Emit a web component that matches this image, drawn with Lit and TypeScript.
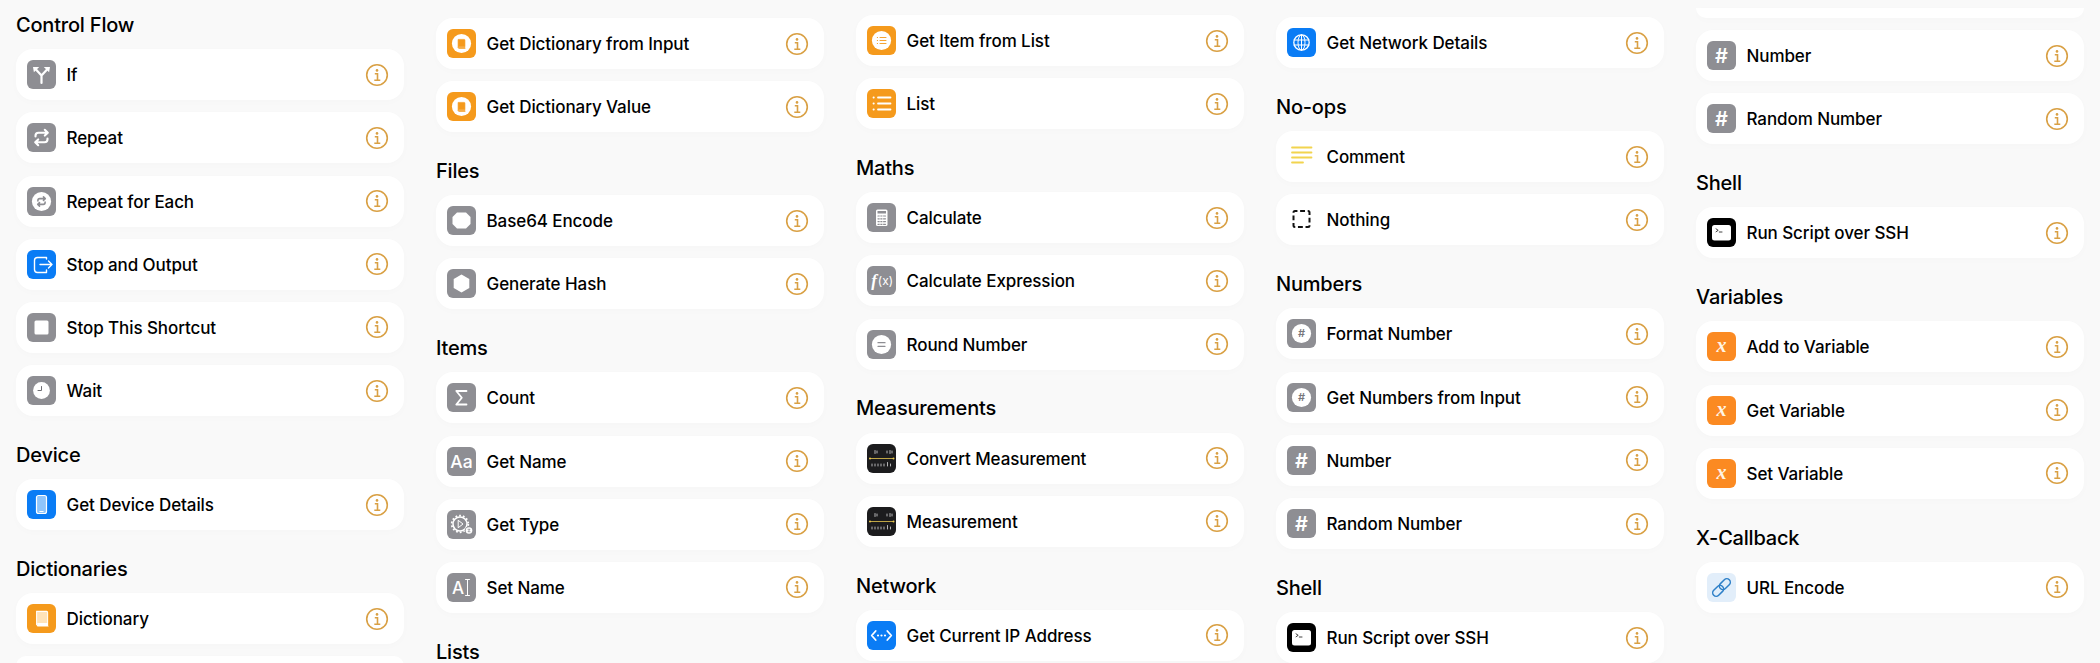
import { LitElement, html, svg, css, nothing } from "lit";
import { customElement } from "lit/decorators.js";

type Tile = "gray" | "blue" | "orange" | "amber" | "dark" | "black" | "pale" | "bare";

const W = "#fff";
const G = "#8e8e93";

const stroke = (d: string, color = W, width = 1.8) =>
  svg`<path d=${d} fill="none" stroke=${color} stroke-width=${width} stroke-linecap="round" stroke-linejoin="round"></path>`;

const disc = (r = 9.6) => svg`<circle cx="14.5" cy="14.5" r=${r} fill=${W}></circle>`;

const glyph = (
  t: string,
  size: number,
  opts: { family?: string; color?: string; y?: number; x?: number; style?: string; weight?: number } = {}
) =>
  svg`<text x=${opts.x ?? 14.5} y=${opts.y ?? 14.5 + size * 0.36} text-anchor="middle" font-size=${size}
    font-family=${opts.family ?? "Inter, sans-serif"} font-style=${opts.style ?? "normal"} font-weight=${opts.weight ?? 500} fill=${opts.color ?? W}>${t}</text>`;

const repeatArrows = (color: string, w: number) => svg`
  ${stroke("M8.5 13.5v-.8a3 3 0 0 1 3-3h9M17.8 6.8l3 2.9-3 2.9", color, w)}
  ${stroke("M20.5 15.5v.8a3 3 0 0 1-3 3h-9M11.2 22.2l-3-2.9 3-2.9", color, w)}`;

const book = (x: number, y: number, s: number, page: string, spine: string) => svg`
  <g transform="translate(${x} ${y}) scale(${s})">
    <path d="M2 1.5h9.500a1 1 0 0 1 1 1V13H3.500A1.500 1.500 0 0 0 2 14.500z" fill=${page} stroke=${spine} stroke-width="1"></path>
    <path d="M2 14.500A1.500 1.500 0 0 1 3.500 13.600h9.500v1.600l.6.8H3.500A1.500 1.500 0 0 1 2 14.500z" fill=${spine}></path>
  </g>`;

const ICONS: Record<string, { tile: Tile; art: unknown }> = {
  branch: {
    tile: "gray",
    art: svg`${stroke("M14.500 23v-7.500L8.500 9M14.500 15.500L20.500 9", W, 2.200)}
      <path d="M6 7h6.200L6.900 12.300zM23 7h-6.200l5.300 5.300z" fill=${W}></path>`,
  },
  repeat: { tile: "gray", art: repeatArrows(W, 2.100) },
  repeatEach: {
    tile: "gray",
    art: svg`${disc()}<g transform="translate(5.800 5.800) scale(.6)">${repeatArrows(G, 2.600)}</g>`,
  },
  output: {
    tile: "blue",
    art: svg`${stroke("M19.500 9V7.500h-9a3 3 0 0 0-3 3v9a3 3 0 0 0 3 3h9V20", W, 1.400)}
      ${stroke("M13 14.500h12M21.500 11l3.500 3.500-3.500 3.500", W, 1.400)}`,
  },
  stop: { tile: "gray", art: svg`<rect x="7.500" y="7.500" width="14" height="14" rx="1.500" fill=${W}></rect>` },
  wait: {
    tile: "gray",
    art: svg`${disc(8.400)}${stroke("M14.500 10.500v4h-3.500", "#6d6d72", 1)}`,
  },
  phone: {
    tile: "blue",
    art: svg`<rect x="9.500" y="5.500" width="10" height="18" rx="2" fill="#8fc5fb" stroke=${W} stroke-width="1.200"></rect>
      ${stroke("M12.800 21.500h3.400", W, 1)}`,
  },
  book: { tile: "amber", art: book(7.500, 5.800, 1.050, "#ffe3b8", W) },
  bookCircle: { tile: "amber", art: svg`${disc()}${book(9.800, 9.400, 0.650, "#f59a1c", "#f59a1c")}` },
  octagon: { tile: "gray", art: svg`<path d="M10 6.500h9l4.500 4.500v7l-4.500 4.500h-9L5.500 18v-7z" fill=${W}></path>` },
  hexagon: { tile: "gray", art: svg`<path d="M14.500 5.500l7.800 4.500v9l-7.800 4.500L6.700 19v-9z" fill=${W}></path>` },
  sum: { tile: "gray", art: stroke("M19.500 8h-10.200l5.500 6.700-5.500 6.800h10.200", W, 1.800) },
  name: { tile: "gray", art: glyph("Aa", 17.500, { y: 20.500 }) },
  type: {
    tile: "gray",
    art: svg`<circle cx="13" cy="14" r="7" fill="none" stroke=${W} stroke-width="1.500"></circle>
      <circle cx="13" cy="14" r="8.300" fill="none" stroke=${W} stroke-width="1.800" stroke-dasharray="1.800 2"></circle>
      ${stroke("M11.500 10.500l4.500 3.500-4.500 3.500z", W, 1)}
      <circle cx="22" cy="20.500" r="4.300" fill=${G}></circle>
      <circle cx="22" cy="20.500" r="3.300" fill=${W}></circle>
      ${stroke("M21 19.300h2l-2 2.400h2", G, 0.800)}`,
  },
  setName: {
    tile: "gray",
    art: svg`${glyph("A", 17, { x: 11, y: 20.500 })}${stroke("M20.500 6.500v16M18.500 6.500h4M18.500 22.500h4", W, 1)}`,
  },
  listCircle: {
    tile: "amber",
    art: svg`${disc()}${stroke("M13 11.500h6M13 14.500h6M13 17.500h6", "#f59a1c", 0.900)}
      ${stroke("M10.300 11.500h.2M10.300 14.500h.2M10.300 17.500h.2", "#f59a1c", 1)}`,
  },
  list: {
    tile: "amber",
    art: svg`${stroke("M11 8.500h12.500M11 14.500h12.500M11 20.500h12.500", W, 1.800)}
      ${stroke("M6.500 8.500h.3M6.500 14.500h.3M6.500 20.500h.3", W, 1.800)}`,
  },
  calc: {
    tile: "gray",
    art: svg`<rect x="9" y="6.500" width="11.500" height="16.500" rx="1.500" fill=${W}></rect>
      <rect x="10.500" y="8" width="8.500" height="2.500" fill=${G}></rect>
      ${stroke("M11 13h7.500M11 15.800h7.500M11 18.600h7.500M11 21.300h7.500", G, 1.200)}
      ${stroke("M13 12.500v9.300M15.700 12.500v9.300", W, 0.700)}`,
  },
  fx: {
    tile: "gray",
    art: svg`${glyph("f", 17, { x: 7, y: 19.500, family: "'Liberation Serif', serif", style: "italic", weight: 700 })}
      ${glyph("(x)", 12, { x: 18.500, y: 18.800, weight: 400 })}`,
  },
  round: {
    tile: "gray",
    art: svg`${disc()}${stroke("M11 12.700h7M11 16.300h7", G, 1.300)}`,
  },
  measure: {
    tile: "dark",
    art: svg`${stroke("M3 14.500h23", "#e9c94f", 0.800)}
      ${stroke("M8 6.500v3M10 7v2M20 7v2M23 6.500v3M25 7v2", "#ddd", 0.800)}
      ${stroke("M5 20v2M8 20v2M11 20v2M14 20v2M17 20v2M20.500 18.500v3.500M23.500 20v2", "#ddd", 0.800)}
      <circle cx="3" cy="14.500" r="1" fill="#e9c94f"></circle><circle cx="26.500" cy="14.500" r="1" fill="#e9c94f"></circle>`,
  },
  ip: {
    tile: "blue",
    art: svg`${stroke("M8.700 10l-4 4.500 4 4.500M20.300 10l4 4.500-4 4.500", W, 1.800)}
      <circle cx="11" cy="14.500" r="1.100" fill=${W}></circle><circle cx="14.500" cy="14.500" r="1.100" fill=${W}></circle><circle cx="18" cy="14.500" r="1.100" fill=${W}></circle>`,
  },
  globe: {
    tile: "blue",
    art: svg`<circle cx="14.500" cy="14.500" r="7.700" fill="none" stroke=${W} stroke-width="1.300"></circle>
      <ellipse cx="14.500" cy="14.500" rx="3.500" ry="7.700" fill="none" stroke=${W} stroke-width="1"></ellipse>
      ${stroke("M14.500 6.800v15.400M7 12h15M7 17h15", W, 1)}`,
  },
  comment: {
    tile: "bare",
    art: svg`${stroke("M5 5.500h19.500M5 10.500h19.500M5 15.500h19.500", "#f2d44e", 1.800)}${stroke("M5 20.500h11", "#f2d44e", 1.800)}`,
  },
  nothing: {
    tile: "bare",
    art: svg`<rect x="6.500" y="6" width="16" height="16" rx="1.500" fill="none" stroke="#111" stroke-width="2" stroke-dasharray="4.900 2.670" stroke-dashoffset="2.450"></rect>`,
  },
  numberCircle: { tile: "gray", art: svg`${disc()}${glyph("#", 11, { color: "#77777c", weight: 600 })}` },
  number: { tile: "gray", art: glyph("#", 20, { weight: 600 }) },
  terminal: {
    tile: "black",
    art: svg`<rect x="5" y="7" width="19" height="15.500" rx="2.500" fill=${W}></rect>
      ${stroke("M9 10.800l2.200 1.500L9 13.800M12.300 14h2.700", "#111", 0.800)}`,
  },
  variable: {
    tile: "orange",
    art: glyph("x", 20, { family: "'Liberation Serif', serif", style: "italic", weight: 700, y: 19.500, color: "#fff4e4" }),
  },
  link: {
    tile: "pale",
    art: svg`<g transform="rotate(-45 14.500 14.500)">
      <rect x="3.500" y="11" width="12.500" height="7" rx="3.500" fill="none" stroke="#2f80c8" stroke-width="1.500"></rect>
      <rect x="13" y="11" width="12.500" height="7" rx="3.500" fill="none" stroke="#2f80c8" stroke-width="1.500"></rect></g>`,
  },
};

type Row = [label: string, icon: keyof typeof ICONS];
// cut: the list runs past the screenshot edge here, so only a bare strip of card shows
type Section = { title?: string; rows: Row[]; cut?: "top" | "bottom" };
type Column = { offset: number; sections: Section[] };

const COLUMNS: Column[] = [
  {
    offset: 13,
    sections: [
      {
        title: "Control Flow",
        rows: [
          ["If", "branch"],
          ["Repeat", "repeat"],
          ["Repeat for Each", "repeatEach"],
          ["Stop and Output", "output"],
          ["Stop This Shortcut", "stop"],
          ["Wait", "wait"],
        ],
      },
      { title: "Device", rows: [["Get Device Details", "phone"]] },
      { title: "Dictionaries", rows: [["Dictionary", "book"]], cut: "bottom" },
    ],
  },
  {
    offset: 18,
    sections: [
      {
        rows: [
          ["Get Dictionary from Input", "bookCircle"],
          ["Get Dictionary Value", "bookCircle"],
        ],
      },
      {
        title: "Files",
        rows: [
          ["Base64 Encode", "octagon"],
          ["Generate Hash", "hexagon"],
        ],
      },
      {
        title: "Items",
        rows: [
          ["Count", "sum"],
          ["Get Name", "name"],
          ["Get Type", "type"],
          ["Set Name", "setName"],
        ],
      },
      { title: "Lists", rows: [] },
    ],
  },
  {
    offset: 15,
    sections: [
      {
        rows: [
          ["Get Item from List", "listCircle"],
          ["List", "list"],
        ],
      },
      {
        title: "Maths",
        rows: [
          ["Calculate", "calc"],
          ["Calculate Expression", "fx"],
          ["Round Number", "round"],
        ],
      },
      {
        title: "Measurements",
        rows: [
          ["Convert Measurement", "measure"],
          ["Measurement", "measure"],
        ],
      },
      { title: "Network", rows: [["Get Current IP Address", "ip"]] },
    ],
  },
  {
    offset: 17.3,
    sections: [
      { rows: [["Get Network Details", "globe"]] },
      {
        title: "No-ops",
        rows: [
          ["Comment", "comment"],
          ["Nothing", "nothing"],
        ],
      },
      {
        title: "Numbers",
        rows: [
          ["Format Number", "numberCircle"],
          ["Get Numbers from Input", "numberCircle"],
          ["Number", "number"],
          ["Random Number", "number"],
        ],
      },
      { title: "Shell", rows: [["Run Script over SSH", "terminal"]] },
    ],
  },
  {
    offset: 8,
    sections: [
      {
        cut: "top",
        rows: [
          ["Number", "number"],
          ["Random Number", "number"],
        ],
      },
      { title: "Shell", rows: [["Run Script over SSH", "terminal"]] },
      {
        title: "Variables",
        rows: [
          ["Add to Variable", "variable"],
          ["Get Variable", "variable"],
          ["Set Variable", "variable"],
        ],
      },
      { title: "X-Callback", rows: [["URL Encode", "link"]] },
    ],
  },
];

@customElement("app-root")
export class AppRoot extends LitElement {
  static styles = css`
    :host {
      display: grid;
      grid-template-columns: repeat(5, 420px);
      height: 663px;
      overflow: hidden;
      background: #f9f9f9;
      color: #000;
      font-family: Inter, "Noto Sans", sans-serif;
    }
    .column {
      display: flex;
      flex-direction: column;
      gap: 26.8px;
      padding: 0 16px;
      min-width: 0;
    }
    h2 {
      margin: 0 0 12.2px;
      height: 24px;
      line-height: 24px;
      font-size: 20px;
      font-weight: 500;
      letter-spacing: -0.2px;
    }
    .rows {
      display: flex;
      flex-direction: column;
      gap: 12.2px;
    }
    .row {
      flex: none;
      display: flex;
      align-items: center;
      gap: 10.5px;
      height: 51px;
      padding: 0 15px 0 11px;
      background: #fff;
      border-radius: 17px;
      box-shadow: 0 2px 8px rgba(0, 0, 0, 0.015);
    }
    .cut-top {
      height: 10px;
      border-radius: 0 0 17px 17px;
    }
    .cut-bottom {
      height: 10px;
      border-radius: 17px 17px 0 0;
    }
    .tile {
      flex: none;
      width: 29px;
      height: 29px;
      border-radius: 6px;
    }
    .tile svg {
      display: block;
    }
    .gray { background: #8e8e93; }
    .blue { background: #0a7cf5; }
    .orange { background: #fb8a22; }
    .amber { background: #f59a1c; }
    .dark { background: #1c1c1e; }
    .black { background: #000; }
    .pale { background: #e2eefa; }
    .bare { background: transparent; }
    .label {
      flex: 1;
      min-width: 0;
      padding-top: 1px;
      font-size: 17px;
      font-weight: 500;
      letter-spacing: -0.08px;
      white-space: nowrap;
    }
    .info {
      flex: none;
      display: block;
    }
  `;

  private renderInfo() {
    return html`<svg class="info" width="24" height="24" viewBox="0 0 24 24" fill="none" stroke="#d9a044">
      <circle cx="12" cy="12" r="10.300" stroke-width="1.600"></circle>
      <path d="M9.800 10.800h2.700v6.300M9.300 17.300h6" stroke-width="1.600"></path>
      <circle cx="12" cy="7.400" r="1.300" fill="#d9a044" stroke="none"></circle>
    </svg>`;
  }

  private renderRow([label, key]: Row) {
    const icon = ICONS[key];
    return html`<div class="row">
      <div class="tile ${icon.tile}">
        <svg width="29" height="29" viewBox="0 0 29 29">${icon.art}</svg>
      </div>
      <div class="label">${label}</div>
      ${this.renderInfo()}
    </div>`;
  }

  render() {
    return COLUMNS.map(
      (col) => html`<div class="column" style="margin-top:${col.offset}px">
        ${col.sections.map(
          (s) => html`<section>
            ${s.title ? html`<h2>${s.title}</h2>` : nothing}
            <div class="rows">
              ${s.cut === "top" ? html`<div class="row cut-top"></div>` : nothing}
              ${s.rows.map((r) => this.renderRow(r))}
              ${s.cut === "bottom" ? html`<div class="row cut-bottom"></div>` : nothing}
            </div>
          </section>`
        )}
      </div>`
    );
  }
}
